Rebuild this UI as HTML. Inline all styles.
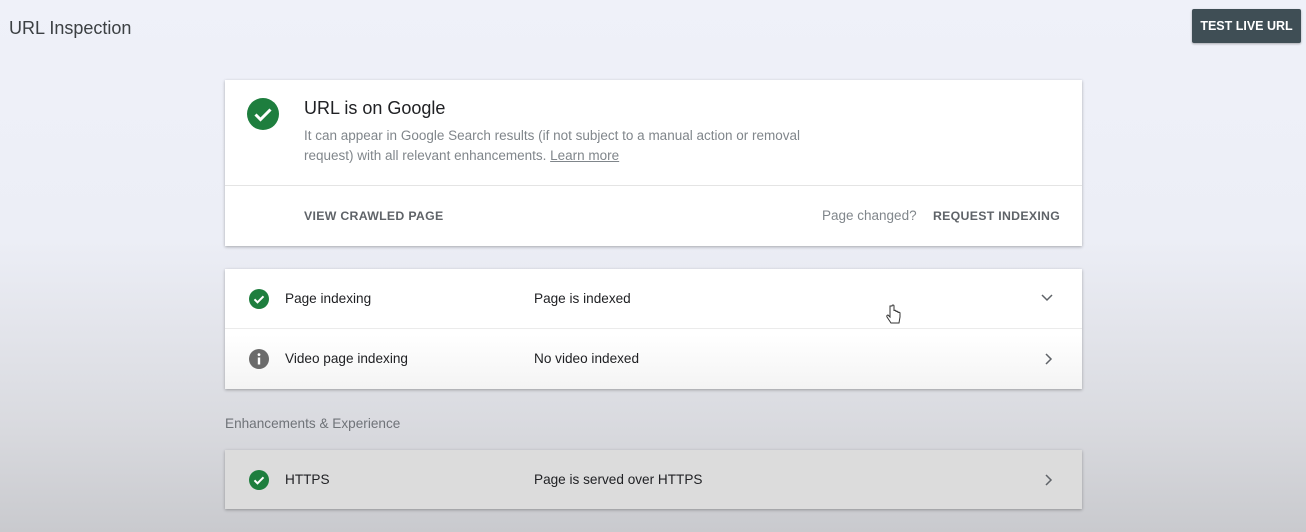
<!DOCTYPE html>
<html><head><style>
body{margin:0;width:1306px;height:532px;overflow:hidden;font-family:"Liberation Sans",sans-serif;background:linear-gradient(180deg,#eff1f9 0%,#eceef6 45%,#d9dadf 80%,#c9cace 100%);position:relative;color:#3c4043}
.a{position:absolute}
.card{position:absolute;left:225px;width:857px;background:#fff;box-shadow:0 1px 3px rgba(0,0,0,.3)}
.row{position:absolute;left:0;width:857px;height:60px;font-size:13.6px;color:#202124}
.row .l{position:absolute;left:60px;top:22px}
.row .m{position:absolute;left:309px;top:22px}
.ic{position:absolute;left:24px;top:20px;width:20px;height:20px}
.chev{position:absolute;right:29px;top:24px}
</style></head><body>
<div class="a" style="left:9px;top:18px;font-size:18px;color:#3c4043">URL Inspection</div>
<div class="a" style="left:1192px;top:9px;width:109px;height:34px;background:#3f4e55;border-radius:2px;box-shadow:0 1px 2px rgba(0,0,0,.3);color:#fff;font-size:12.5px;font-weight:bold;line-height:34px;text-align:center">TEST LIVE URL</div>

<div class="card" style="top:80px;height:166px">
  <svg class="a" style="left:22px;top:18px" width="32" height="32" viewBox="0 0 32 32"><circle cx="16" cy="16" r="16" fill="#1e7e3e"/><path d="M8.5 16.5l5 5 10-10" stroke="#fff" stroke-width="3" fill="none"/></svg>
  <div class="a" style="left:79px;top:18px;font-size:18px;color:#202124">URL is on Google</div>
  <div class="a" style="left:79px;top:46px;font-size:13.5px;line-height:20px;color:#80868b;width:525px">It can appear in Google Search results (if not subject to a manual action or removal request) with all relevant enhancements. <span style="text-decoration:underline">Learn more</span></div>
  <div class="a" style="left:0;top:105px;width:857px;height:1px;background:#e4e4e4"></div>
  <div class="a" style="left:79px;top:129px;font-size:12.3px;font-weight:bold;letter-spacing:.3px;color:#5f6368">VIEW CRAWLED PAGE</div>
  <div class="a" style="left:597px;top:128px;font-size:13.5px;color:#80868b">Page changed?</div>
  <div class="a" style="left:708px;top:129px;font-size:12.3px;font-weight:bold;letter-spacing:.3px;color:#5f6368">REQUEST INDEXING</div>
</div>

<div class="card" style="top:269px;height:120px;background:linear-gradient(180deg,#fff 0%,#fff 55%,#f4f4f4 100%)">
  <div class="row" style="top:0">
    <svg class="ic" viewBox="0 0 20 20"><circle cx="10" cy="10" r="10" fill="#1e7e3e"/><path d="M5.5 10.3l3 3 6-6" stroke="#fff" stroke-width="2" fill="none"/></svg>
    <span class="l">Page indexing</span><span class="m">Page is indexed</span>
    <svg class="chev" width="12" height="10" viewBox="0 0 12 10"><path d="M1 2l5 5 5-5" stroke="#5f6368" stroke-width="1.5" fill="none"/></svg>
  </div>
  <div class="a" style="left:0;top:59px;width:857px;height:1px;background:#ebebeb"></div>
  <div class="row" style="top:60px">
    <svg class="ic" viewBox="0 0 20 20"><circle cx="10" cy="10" r="10" fill="#6b6b6b"/><rect x="8.8" y="8.5" width="2.4" height="7" fill="#fff"/><circle cx="10" cy="5.6" r="1.4" fill="#fff"/></svg>
    <span class="l">Video page indexing</span><span class="m">No video indexed</span>
    <svg class="chev" width="10" height="12" viewBox="0 0 10 12"><path d="M3 1l5 5-5 5" stroke="#5f6368" stroke-width="1.5" fill="none"/></svg>
  </div>
</div>

<div class="a" style="left:225px;top:416px;font-size:13.6px;color:#6f7378">Enhancements &amp; Experience</div>

<div class="card" style="top:450px;height:59px;background:#dcdcdc">
  <div class="row" style="top:0">
    <svg class="ic" viewBox="0 0 20 20"><circle cx="10" cy="10" r="10" fill="#1e7e3e"/><path d="M5.5 10.3l3 3 6-6" stroke="#fff" stroke-width="2" fill="none"/></svg>
    <span class="l">HTTPS</span><span class="m">Page is served over HTTPS</span>
    <svg class="chev" width="10" height="12" viewBox="0 0 10 12"><path d="M3 1l5 5-5 5" stroke="#5f6368" stroke-width="1.5" fill="none"/></svg>
  </div>
</div>

<svg class="a" style="left:886px;top:304px" width="16" height="22" viewBox="0 0 16 22"><path d="M4 2v11l-2-2c-1 0-1.5 1-1 2l4 6h8l1-6v-4c0-1-2-1-2 0v-1c0-1-2-1-2 0v-1c0-1-2-1-2 0V2c0-1.3-2-1.3-2 0z" fill="#fff" stroke="#333" stroke-width="1"/></svg>
</body></html>
